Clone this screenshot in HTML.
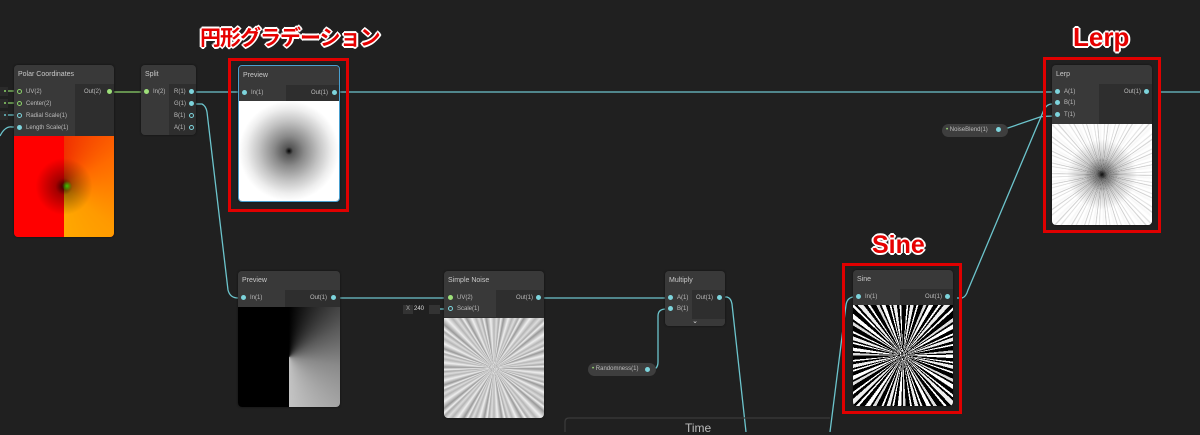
<!DOCTYPE html>
<html><head><meta charset="utf-8"><style>
*{margin:0;padding:0;box-sizing:border-box}
body{width:1200px;height:432px;background:#202020;position:relative;overflow:hidden;font-family:"Liberation Sans","Noto Sans CJK JP",sans-serif;color:#c8c8c8}
.n{position:absolute;background:#2e2e2e;border-radius:4px;overflow:hidden;box-shadow:0 0 2px #111}
.h{position:absolute;left:0;right:0;top:0;height:19px;background:#393939;font-size:7px;line-height:19px;padding-left:4px;color:#c8c8c8}
.p{position:absolute;font-size:6px;color:#bbb;white-space:nowrap}
.ip{position:absolute;background:#393939}
.dot{position:absolute;width:5px;height:5px;border-radius:50%;background:#7dd4dc}
.dg{background:#9ee07a}
.ring{position:absolute;width:5px;height:5px;border-radius:50%;border:1px solid #7dd4dc}
.pv{position:absolute;left:0;right:0;bottom:0}
.red{position:absolute;border:3px solid #e00000}
.lbl{position:absolute;color:#e60000;font-weight:bold;text-shadow:1px 0 #fff,-1px 0 #fff,0 1px #fff,0 -1px #fff,1px 1px #fff,-1px -1px #fff,1px -1px #fff,-1px 1px #fff,2px 0 #fff,-2px 0 #fff,0 2px #fff,0 -2px #fff}
.pill{position:absolute;height:13px;border-radius:7px;background:#3e3e3e;font-size:6px;line-height:13px;color:#bbb}
</style></head><body>
<svg width="1200" height="432" style="position:absolute;left:0;top:0" fill="none" stroke-width="1.3">
<path d="M0,136 Q5,126 12,127 L18,127" stroke="#6cc4cc"/>
<path d="M108,92 L145,92" stroke="#8cd26a"/>
<path d="M191,92 L242,92" stroke="#6cc4cc"/>
<path d="M333,92 L1056,92" stroke="#6cc4cc"/>
<path d="M1158,92 L1200,92" stroke="#6cc4cc"/>
<path d="M191,104 L202,104 Q206,106 207,112 L228,290 Q230,298 238,298 L243,298" stroke="#6cc4cc"/>
<path d="M333,298 L448,298" stroke="#6cc4cc"/>
<path d="M430,309 L448,309" stroke="#6cc4cc"/>
<path d="M538,298 L669,298" stroke="#6cc4cc"/>
<path d="M650,370 Q658,370 658,362 L658,316 Q658,309 666,309 L669,309" stroke="#6cc4cc"/>
<path d="M720,297 L727,297 Q731,298 732,304 L746,432" stroke="#6cc4cc"/>
<path d="M830,432 L846,305 Q847,298 853,297 L856,297" stroke="#6cc4cc"/>
<path d="M957,298 L962,298 Q966,297 968,290 L1043,112 Q1046,104 1052,104 L1056,104" stroke="#6cc4cc"/>
<path d="M1005,129 L1040,117 Q1046,116 1056,116" stroke="#6cc4cc"/>
<path d="M565,432 L565,422 Q565,418 569,418 L830,418" stroke="#3a3a3a"/>
</svg>
<div style="position:absolute;left:0;top:87px;width:8px;height:9px;background:#2a2a2a"></div>
<div style="position:absolute;left:0;top:99px;width:8px;height:9px;background:#2a2a2a"></div>
<div style="position:absolute;left:0;top:111px;width:8px;height:9px;background:#2a2a2a"></div>
<svg width="30" height="130" style="position:absolute;left:0;top:80px" stroke-width="1.2" fill="none">
<path d="M8,11 L18,11" stroke="#8cd26a"/><path d="M8,23 L18,23" stroke="#8cd26a"/><path d="M8,35 L18,35" stroke="#6cc4cc"/>
<circle cx="5" cy="11" r="1" fill="#8cd26a"/><circle cx="5" cy="23" r="1" fill="#8cd26a"/><circle cx="5" cy="35" r="1" fill="#6cc4cc"/>
</svg>

<!-- Polar -->
<div class="n" style="left:14px;top:65px;width:100px;height:172px">
<div class="h">Polar Coordinates</div>
<div class="ip" style="left:0;top:19px;width:61px;height:52px"></div>
<div class="ring" style="left:3px;top:24px;border-color:#8cd26a"></div><div class="p" style="left:12px;top:24px">UV(2)</div>
<div class="ring" style="left:3px;top:36px;border-color:#8cd26a"></div><div class="p" style="left:12px;top:36px">Center(2)</div>
<div class="ring" style="left:3px;top:48px"></div><div class="p" style="left:12px;top:48px">Radial Scale(1)</div>
<div class="dot" style="left:3px;top:60px"></div><div class="p" style="left:12px;top:60px">Length Scale(1)</div>
<div class="p" style="left:70px;top:24px">Out(2)</div><div class="dot dg" style="left:93px;top:24px"></div>
<div class="pv" style="top:71px;background:#f00"></div>
<div style="position:absolute;left:50px;right:0;top:71px;bottom:0;background:conic-gradient(from 0deg at 0% 50%,#f03000 0deg,#ff6a00 60deg,#ff9a00 130deg,#ffa800 180deg)"></div>
<div class="pv" style="top:71px;background:radial-gradient(circle at 50% 50%,rgba(0,0,0,.8) 0,rgba(0,0,0,.35) 12%,rgba(0,0,0,0) 40%)"></div>
<div style="position:absolute;left:48px;top:116px;width:10px;height:10px;border-radius:50%;background:radial-gradient(circle,#40c000 0,rgba(80,180,0,0) 70%)"></div>
</div>

<!-- Split -->
<div class="n" style="left:141px;top:65px;width:55px;height:70px">
<div class="h">Split</div>
<div class="ip" style="left:0;top:19px;width:28px;height:51px"></div>
<div class="dot dg" style="left:3px;top:24px"></div><div class="p" style="left:12px;top:24px">In(2)</div>
<div class="p" style="left:33px;top:24px">R(1)</div><div class="dot" style="left:48px;top:24px"></div>
<div class="p" style="left:33px;top:36px">G(1)</div><div class="dot" style="left:48px;top:36px"></div>
<div class="p" style="left:33px;top:48px">B(1)</div><div class="ring" style="left:48px;top:48px"></div>
<div class="p" style="left:33px;top:60px">A(1)</div><div class="ring" style="left:48px;top:60px"></div>
</div>

<!-- Preview1 -->
<div class="red" style="left:228px;top:58px;width:121px;height:154px"></div>
<div class="n" style="left:238px;top:65px;width:102px;height:137px;border:1px solid #4aa0d0">
<div class="h">Preview</div>
<div class="ip" style="left:0;top:19px;width:47px;height:16px"></div>
<div class="dot" style="left:3px;top:24px"></div><div class="p" style="left:12px;top:24px">In(1)</div>
<div class="p" style="left:72px;top:24px">Out(1)</div><div class="dot" style="left:93px;top:24px"></div>
<div class="pv" style="top:35px;background:radial-gradient(circle closest-side at 50% 50%,#000 0,#555 8%,#8a8a8a 30%,#c4c4c4 60%,#eee 85%,#fff 100%)"></div>
</div>
<div class="lbl" style="left:200px;top:26px;font-size:21px;line-height:26px;letter-spacing:-1px">円形グラデーション</div>

<!-- Preview2 -->
<div class="n" style="left:238px;top:271px;width:102px;height:136px">
<div class="h">Preview</div>
<div class="ip" style="left:0;top:19px;width:47px;height:17px"></div>
<div class="dot" style="left:3px;top:24px"></div><div class="p" style="left:12px;top:24px">In(1)</div>
<div class="p" style="left:72px;top:24px">Out(1)</div><div class="dot" style="left:93px;top:24px"></div>
<div class="pv" style="top:36px;background:#000"></div>
<div style="position:absolute;left:51px;right:0;top:36px;bottom:0;background:conic-gradient(from 0deg at 0% 50%,#000 0deg,#5a5a5a 60deg,#8a8a8a 100deg,#a8a8a8 140deg,#c4c4c4 180deg)"></div>
</div>

<!-- Simple Noise -->
<div style="position:absolute;left:403px;top:305px;width:10px;height:9px;background:#333;font-size:6px;line-height:9px;text-align:center;color:#aaa">X</div>
<div style="position:absolute;left:414px;top:305px;width:13px;height:9px;font-size:6px;line-height:9px;color:#ddd">240</div>
<div style="position:absolute;left:429px;top:305px;width:11px;height:9px;background:#333"></div>
<div class="n" style="left:444px;top:271px;width:100px;height:147px">
<div class="h">Simple Noise</div>
<div class="ip" style="left:0;top:19px;width:52px;height:27px"></div>
<div class="dot dg" style="left:4px;top:24px"></div><div class="p" style="left:13px;top:24px">UV(2)</div>
<div class="ring" style="left:4px;top:35px"></div><div class="p" style="left:13px;top:35px">Scale(1)</div>
<div class="p" style="left:72px;top:24px">Out(1)</div><div class="dot" style="left:92px;top:24px"></div>
<div class="pv" style="top:47px;background:repeating-conic-gradient(from 3deg at 50% 50%,#ddd 0deg,#aaa 3deg,#f0f0f0 5deg,#999 8deg,#ccc 11deg,#eee 13deg,#b5b5b5 17deg,#ddd 20deg)"></div>
</div>

<!-- Multiply -->
<div class="n" style="left:665px;top:271px;width:60px;height:55px">
<div class="h">Multiply</div>
<div class="ip" style="left:0;top:19px;width:27px;height:29px"></div>
<div class="dot" style="left:3px;top:24px"></div><div class="p" style="left:12px;top:24px">A(1)</div>
<div class="dot" style="left:3px;top:35px"></div><div class="p" style="left:12px;top:35px">B(1)</div>
<div class="p" style="left:31px;top:24px">Out(1)</div><div class="dot" style="left:52px;top:24px"></div>
<div style="position:absolute;left:0;right:0;top:48px;height:7px;background:#393939;font-size:7px;line-height:6px;text-align:center;color:#ddd">⌄</div>
</div>

<div class="pill" style="left:588px;top:363px;width:68px"><span style="color:#9ee07a;margin-left:4px">•</span> Randomness(1)</div>
<div class="dot" style="left:645px;top:367px"></div>
<div class="pill" style="left:942px;top:124px;width:66px"><span style="color:#9ee07a;margin-left:4px">•</span> NoiseBlend(1)</div>
<div class="dot" style="left:996px;top:127px"></div>

<div style="position:absolute;left:685px;top:421px;font-size:12px;color:#bbb">Time</div>

<!-- Sine -->
<div class="red" style="left:842px;top:263px;width:120px;height:151px"></div>
<div class="n" style="left:853px;top:270px;width:100px;height:136px">
<div class="h">Sine</div>
<div class="ip" style="left:0;top:19px;width:47px;height:16px"></div>
<div class="dot" style="left:3px;top:24px"></div><div class="p" style="left:12px;top:24px">In(1)</div>
<div class="p" style="left:72px;top:24px">Out(1)</div><div class="dot" style="left:92px;top:24px"></div>
<div class="pv" style="top:35px;background:repeating-conic-gradient(from 0deg at 50% 50%,#000 0deg,#000 4deg,#fff 4deg,#fff 6deg,#000 6deg,#000 8deg,#eee 8deg,#eee 12deg,#000 12deg,#000 15deg,#fff 15deg,#fff 17deg,#000 17deg,#000 22deg,#ddd 22deg,#ddd 25deg,#000 25deg,#000 27deg,#fff 27deg,#fff 31deg)"></div>
</div>
<div class="lbl" style="left:872px;top:230px;font-size:25px;line-height:30px">Sine</div>

<!-- Lerp -->
<div class="red" style="left:1043px;top:57px;width:118px;height:176px"></div>
<div class="n" style="left:1052px;top:65px;width:100px;height:160px">
<div class="h">Lerp</div>
<div class="ip" style="left:0;top:19px;width:47px;height:40px"></div>
<div class="dot" style="left:3px;top:24px"></div><div class="p" style="left:12px;top:24px">A(1)</div>
<div class="dot" style="left:3px;top:35px"></div><div class="p" style="left:12px;top:35px">B(1)</div>
<div class="dot" style="left:3px;top:47px"></div><div class="p" style="left:12px;top:47px">T(1)</div>
<div class="p" style="left:72px;top:24px">Out(1)</div><div class="dot" style="left:92px;top:24px"></div>
<div class="pv" style="top:59px;background:repeating-conic-gradient(from 0deg at 50% 50%,#fff 0deg,#fff 2deg,#bbb 3deg,#fff 4deg,#fff 6deg,#999 7deg,#fff 8deg,#f0f0f0 10deg,#fff 12deg)"></div>
<div class="pv" style="top:59px;background:radial-gradient(circle closest-side at 50% 50%,rgba(0,0,0,.95) 0,rgba(0,0,0,.55) 10%,rgba(0,0,0,.2) 35%,rgba(255,255,255,.3) 70%,rgba(255,255,255,.5) 100%)"></div>
</div>
<div class="lbl" style="left:1073px;top:22px;font-size:26px;line-height:30px">Lerp</div>
</body></html>
